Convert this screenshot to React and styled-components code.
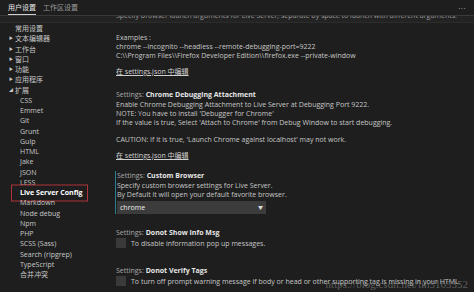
import React from "react";
import styled, { createGlobalStyle } from "styled-components";

const Global = createGlobalStyle`
  html, body {
    margin: 0;
    padding: 0;
    background: #1e1e1e;
  }
  body {
    width: 474px;
    height: 292px;
    overflow: hidden;
    font-family: "Open Sans", "Noto Sans CJK SC", sans-serif;
    color: #cccccc;
  }
`;

const Wrapper = styled.div`
  position: relative;
  width: 474px;
  height: 292px;
  background: #1e1e1e;
  overflow: hidden;
`;

const TopBar = styled.header`
  display: flex;
  align-items: flex-end;
  height: 15px;
  padding: 0 8px;
  gap: 7px;
  border-bottom: 1px solid #3a3a3a;
`;

const Tab = styled.div`
  font-size: 7px;
  line-height: 12px;
  color: ${p => (p.active ? "#e8e8e8" : "#9a9a9a")};
  border-bottom: 1px solid ${p => (p.active ? "#d0d0d0" : "transparent")};
`;

const More = styled.div`
  margin-left: auto;
  align-self: center;
  font-size: 8px;
  color: #c0c0c0;
  letter-spacing: 0.5px;
`;

const Band = styled.div`
  height: 6px;
  background: #232323;
  border-bottom: 1px solid #2c2c2c;
  overflow: hidden;
  padding-left: 116px;
`;

const Clipped = styled.div`
  font-size: 7px;
  line-height: 9px;
  margin-top: -5px;
  color: #9c9c9c;
  white-space: nowrap;
`;

const Body = styled.div`
  display: grid;
  grid-template-columns: 116px 1fr;
`;

const Tree = styled.ul`
  list-style: none;
  margin: 0;
  padding: 1px 0 0 0;
`;

const Node = styled.li`
  position: relative;
  height: 10.25px;
  line-height: 10.25px;
  font-size: 7px;
  padding-left: ${p => (p.child ? 20 : 15)}px;
  color: ${p => (p.selected ? "#ffffff" : "#c8c8c8")};
  font-weight: ${p => (p.selected ? 700 : 400)};
  white-space: nowrap;
`;

const Arrow = styled.span`
  position: absolute;
  left: 9px;
  top: 0;
  font-size: 4px;
  color: #c8c8c8;
`;

const Selected = styled.span`
  position: absolute;
  left: 11px;
  top: 50%;
  transform: translateY(-50%);
  width: 77px;
  height: 17px;
  border: 1px solid #b0323a;
  box-sizing: border-box;
`;

const Content = styled.div`
  padding-top: 10px;
  font-size: 7px;
  line-height: 9px;
  color: #c6c6c6;
`;

const Block = styled.div`
  padding-left: ${p => (p.focused ? 1 : 0)}px;
  border-left: 1px solid ${p => (p.focused ? "#2a7d8c" : "transparent")};
  margin-left: -1px;
  margin-bottom: ${p => p.gap || 0}px;
`;

const Line = styled.div`
  white-space: nowrap;
  height: ${p => p.h || 9}px;
`;

const Link = styled.span`
  text-decoration: underline;
  color: #d0d0d0;
`;

const Title = styled.div`
  color: #a8a8a8;
  white-space: nowrap;
  margin-bottom: 1px;
  b {
    color: #e6e6e6;
    font-weight: 700;
  }
`;

const Select = styled.div`
  display: flex;
  align-items: center;
  justify-content: space-between;
  width: 149px;
  height: 13px;
  margin-top: 2px;
  padding: 0 3px;
  box-sizing: border-box;
  background: #3c3c3c;
  color: #f0f0f0;
`;

const Caret = styled.span`
  font-size: 5px;
  color: #e0e0e0;
`;

const CheckRow = styled.div`
  display: flex;
  align-items: center;
  gap: 5px;
  white-space: nowrap;
  margin-top: 1px;
`;

const Box = styled.span`
  width: 10px;
  height: 10px;
  background: #3a3a3a;
  flex: none;
`;

const Watermark = styled.div`
  position: absolute;
  right: 6px;
  bottom: 2px;
  font-family: "Liberation Serif", serif;
  font-size: 11px;
  color: rgba(150, 150, 150, 0.55);
`;

const top = ["常用设置", "文本编辑器", "工作台", "窗口", "功能", "应用程序"];
const exts = [
  "CSS", "Emmet", "Git", "Grunt", "Gulp", "HTML", "Jake", "JSON", "LESS",
  "Live Server Config", "Markdown", "Node debug", "Npm", "PHP", "SCSS (Sass)",
  "Search (ripgrep)", "TypeScript", "合并冲突",
];

export default function App() {
  return (
    <Wrapper>
      <Global />
      <TopBar>
        <Tab active>用户设置</Tab>
        <Tab>工作区设置</Tab>
        <More>···</More>
      </TopBar>
      <Band>
        <Clipped>Specify browser launch arguments for Live Server, separate by space to launch with different arguments.</Clipped>
      </Band>
      <Body>
        <Tree>
          {top.map((t, i) => (
            <Node key={t}>
              {i > 0 && <Arrow>▶</Arrow>}
              {t}
            </Node>
          ))}
          <Node>
            <Arrow>◢</Arrow>扩展
          </Node>
          {exts.map(t => {
            const sel = t === "Live Server Config";
            return (
              <Node key={t} child selected={sel}>
                {sel && <Selected />}
                {t}
              </Node>
            );
          })}
        </Tree>
        <Content>
          <Block gap={7}>
            <Line>Examples :</Line>
            <Line>chrome --incognito --headless --remote-debugging-port=9222</Line>
            <Line>C:\\Program Files\\Firefox Developer Edition\\firefox.exe --private-window</Line>
            <Line h={7} />
            <Line><Link>在 settings.json 中编辑</Link></Line>
          </Block>
          <Block gap={11}>
            <Line h={7} />
            <Title>Settings: <b>Chrome Debugging Attachment</b></Title>
            <Line>Enable Chrome Debugging Attachment to Live Server at Debugging Port 9222.</Line>
            <Line>NOTE: You have to install 'Debugger for Chrome'</Line>
            <Line>If the value is true, Select 'Attach to Chrome' from Debug Window to start debugging.</Line>
            <Line h={8} />
            <Line>CAUTION: If it is true, 'Launch Chrome against localhost' may not work.</Line>
            <Line h={7} />
            <Line><Link>在 settings.json 中编辑</Link></Line>
          </Block>
          <Block focused gap={14}>
            <Title>Settings: <b>Custom Browser</b></Title>
            <Line>Specify custom browser settings for Live Server.</Line>
            <Line>By Default it will open your default favorite browser.</Line>
            <Select>
              chrome
              <Caret>▼</Caret>
            </Select>
          </Block>
          <Block gap={18}>
            <Title>Settings: <b>Donot Show Info Msg</b></Title>
            <CheckRow>
              <Box />
              To disable information pop up messages.
            </CheckRow>
          </Block>
          <Block>
            <Title>Settings: <b>Donot Verify Tags</b></Title>
            <CheckRow>
              <Box />
              To turn off prompt warning message if body or head or other supporting tag is missing in your HTML.
            </CheckRow>
          </Block>
        </Content>
      </Body>
      <Watermark>https://blog.csdn.net/lin5165352</Watermark>
    </Wrapper>
  );
}
